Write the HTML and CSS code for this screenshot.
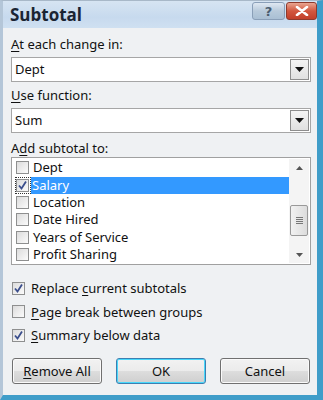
FILE: index.html
```html
<!DOCTYPE html>
<html>
<head>
<meta charset="utf-8">
<link rel="stylesheet" href="styles.css">
</head>
<body>
<div class="window">
  <div class="titlebar">
    <span class="title">Subtotal</span>
    <div class="caption-btns">
      <span class="cbtn help">?</span>
      <span class="cbtn close"><svg width="14" height="10" viewBox="0 0 14 10"><path d="M2 1 L12 9 M12 1 L2 9" stroke="#fff" stroke-width="2.6" stroke-linecap="round"/></svg></span>
    </div>
  </div>
  <div class="content">
    <div class="label l1"><u>A</u>t each change in:</div>
    <div class="combo"><span class="combo-text">Dept</span><span class="drop"><svg width="9" height="5" viewBox="0 0 9 5"><path d="M0 0 H9 L4.5 5 Z" fill="#111"/></svg></span></div>
    <div class="label l2"><u>U</u>se function:</div>
    <div class="combo"><span class="combo-text">Sum</span><span class="drop"><svg width="9" height="5" viewBox="0 0 9 5"><path d="M0 0 H9 L4.5 5 Z" fill="#111"/></svg></span></div>
    <div class="label l3">A<u>d</u>d subtotal to:</div>
    <div class="listbox">
      <div class="rows">
        <div class="row"><span class="cb"></span><span class="rtext">Dept</span></div>
        <div class="row sel"><span class="focus"><span class="cb checked"><svg width="11" height="11" viewBox="0 0 11 11"><path d="M2 5.5 L4.5 8.5 L9 1.5" stroke="#3a4e8c" stroke-width="1.8" fill="none"/></svg></span></span><span class="rtext">Salary</span></div>
        <div class="row"><span class="cb"></span><span class="rtext">Location</span></div>
        <div class="row"><span class="cb"></span><span class="rtext">Date Hired</span></div>
        <div class="row"><span class="cb"></span><span class="rtext">Years of Service</span></div>
        <div class="row"><span class="cb"></span><span class="rtext">Profit Sharing</span></div>
      </div>
      <div class="scrollbar">
        <span class="arrow"><svg width="7" height="4" viewBox="0 0 7 4"><path d="M0 4 H7 L3.5 0 Z" fill="#555"/></svg></span>
        <div class="track"><div class="thumb"><svg width="7" height="7" viewBox="0 0 7 7"><path d="M0 0.5 H7 M0 2.5 H7 M0 4.5 H7 M0 6.5 H7" stroke="#777" stroke-width="1"/></svg></div></div>
        <span class="arrow"><svg width="7" height="4" viewBox="0 0 7 4"><path d="M0 0 H7 L3.5 4 Z" fill="#555"/></svg></span>
      </div>
    </div>
    <div class="options">
      <div class="opt"><span class="cb checked"><svg width="11" height="11" viewBox="0 0 11 11"><path d="M2 5.5 L4.5 8.5 L9 1.5" stroke="#3a4e8c" stroke-width="1.8" fill="none"/></svg></span><span>Replace <u>c</u>urrent subtotals</span></div>
      <div class="opt"><span class="cb"></span><span><u>P</u>age break between groups</span></div>
      <div class="opt"><span class="cb checked"><svg width="11" height="11" viewBox="0 0 11 11"><path d="M2 5.5 L4.5 8.5 L9 1.5" stroke="#3a4e8c" stroke-width="1.8" fill="none"/></svg></span><span><u>S</u>ummary below data</span></div>
    </div>
    <div class="buttons">
      <span class="btn"><u>R</u>emove All</span>
      <span class="btn default">OK</span>
      <span class="btn">Cancel</span>
    </div>
  </div>
</div>
</body>
</html>
```
FILE: styles.css
```css
html, body {
  margin: 0;
  padding: 0;
  background: #f0f0f0;
}
body {
  font-family: "Noto Sans", "Open Sans", sans-serif;
  font-size: 13px;
  color: #111;
}
.window {
  width: 323px;
  height: 400px;
  box-sizing: border-box;
  border-left: 3px solid #b4c6d8;
  border-top: 1px solid #a8b8c8;
  border-right: 6px solid #3f9dc9;
  border-bottom: 5px solid #3f9dc9;
  background: #eff1f3;
  display: flex;
  flex-direction: column;
}
.titlebar {
  height: 27px;
  flex: none;
  background: linear-gradient(#d6e4f2, #c7daee 60%, #cfe0f1);
  display: flex;
  align-items: flex-start;
  justify-content: space-between;
  padding: 0 0 0 7px;
}
.title {
  font-family: "Open Sans", "Noto Sans", sans-serif;
  font-weight: 700;
  font-size: 17px;
  color: #1a2433;
  line-height: 27px;
}
.caption-btns {
  display: flex;
  gap: 1px;
  margin-top: 1px;
}
.cbtn {
  height: 16px;
  border: 1px solid #8a9fb8;
  border-radius: 3px;
  display: flex;
  align-items: center;
  justify-content: center;
}
.help {
  width: 31px;
  background: linear-gradient(#dfe8f2, #b8cadb 50%, #a9bfd4);
  color: #4b5d70;
  font-weight: 700;
  font-size: 13px;
  font-family: "DejaVu Sans", sans-serif;
}
.close {
  width: 29px;
  border-color: #8e3a2c;
  background: linear-gradient(#e9a590, #d2573e 50%, #c2402a);
}
.content {
  flex: 1;
  padding: 0 6px 0 8px;
  display: flex;
  flex-direction: column;
}
.label {
  line-height: 16px;
  height: 16px;
}
.l1 { margin-top: 8px; }
.l2 { margin-top: 5px; }
.l3 { margin-top: 7px; }
.combo {
  margin-top: 5px;
  height: 25px;
  box-sizing: border-box;
  border: 1px solid #a6a6a6;
  background: #fff;
  display: flex;
  align-items: stretch;
  justify-content: space-between;
}
.combo-text {
  padding-left: 3px;
  line-height: 23px;
}
.drop {
  width: 19px;
  margin: 1px;
  box-sizing: border-box;
  border: 1px solid #8d8d8d;
  background: linear-gradient(#f4f4f4, #e0e0e0);
  display: flex;
  align-items: center;
  justify-content: center;
}
.listbox {
  margin-top: 1px;
  height: 108px;
  box-sizing: border-box;
  border: 1px solid #a0a0a0;
  background: #fff;
  display: flex;
  padding: 1px;
}
.rows {
  flex: 1;
  padding-top: 0;
  padding-left: 2px;
}
.row {
  height: 17.4px;
  display: flex;
  align-items: center;
}
.cb {
  width: 13px;
  height: 13px;
  box-sizing: border-box;
  border: 1px solid #8e8f8f;
  background: linear-gradient(135deg, #dcdcdc, #fbfbfb);
  display: inline-flex;
  align-items: center;
  justify-content: center;
  flex: none;
}
.row .cb { margin-left: 1px; }
.focus {
  display: inline-flex;
  padding: 1px 2px 1px 0;
  outline: 1px dotted #333;
  outline-offset: -1px;
  height: 17px;
  box-sizing: border-box;
  align-items: center;
}
.rtext {
  margin-left: 3px;
  padding-left: 1px;
  line-height: 17px;
  flex: 1;
}
.sel .rtext {
  background: #3399ff;
  color: #fff;
  margin-left: 0;
  padding-left: 1px;
}
.scrollbar {
  width: 20px;
  display: flex;
  flex-direction: column;
  align-items: stretch;
  background: #f4f4f4;
}
.arrow {
  height: 17px;
  display: flex;
  align-items: center;
  justify-content: center;
}
.track {
  flex: 1;
  display: flex;
  flex-direction: column;
  justify-content: flex-end;
  padding-bottom: 10px;
}
.thumb {
  height: 31px;
  margin: 0 1px;
  box-sizing: border-box;
  border: 1px solid #999;
  border-radius: 2px;
  background: linear-gradient(90deg, #f2f2f2, #dcdcdc);
  display: flex;
  align-items: center;
  justify-content: center;
}
.options {
  margin-top: 15px;
  display: flex;
  flex-direction: column;
  gap: 7.5px;
}
.opt {
  display: flex;
  align-items: center;
  height: 16px;
  gap: 6px;
  padding-left: 1px;
}
.buttons {
  margin-top: 15px;
  display: flex;
  justify-content: space-between;
  padding-left: 1px;
  padding-right: 1px;
}
.btn {
  width: 90px;
  height: 26px;
  box-sizing: border-box;
  border: 1px solid #707070;
  border-radius: 3px;
  background: linear-gradient(#f2f2f2, #ebebeb 50%, #dddddd 51%, #cfcfcf);
  display: flex;
  align-items: center;
  justify-content: center;
  box-shadow: inset 0 0 0 1px #fafafa;
}
.btn.default {
  border-color: #3c7fb1;
  box-shadow: inset 0 0 0 1px #48d8fb;
}
u { text-decoration: underline; text-underline-offset: 2px; }
```
